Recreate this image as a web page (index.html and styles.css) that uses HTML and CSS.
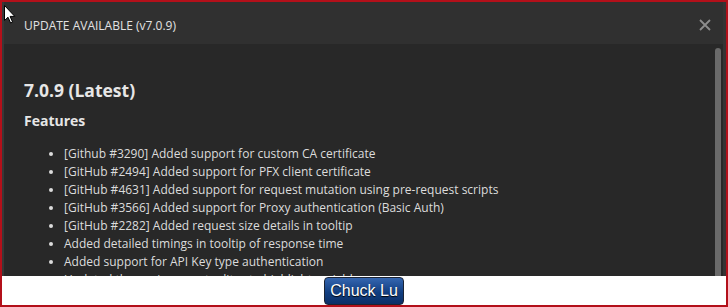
FILE: index.html
```html
<!DOCTYPE html>
<html>
<head>
<meta charset="utf-8">
<link rel="stylesheet" href="styles.css">
</head>
<body>
<div class="frame">
  <div class="screen">
    <div class="edge-left"></div>
    <div class="dialog">
      <div class="header">
        <span class="title">UPDATE AVAILABLE (v7.0.9)</span>
        <svg class="close" width="12" height="12" viewBox="0 0 12 12"><path d="M1 1 L11 11 M11 1 L1 11" stroke="#8c8c8c" stroke-width="1.8" fill="none"/></svg>
      </div>
      <div class="body">
        <div class="content">
          <h1 class="version">7.0.9 (Latest)</h1>
          <h2 class="section">Features</h2>
          <ul class="list">
            <li>[Github #3290] Added support for custom CA certificate</li>
            <li>[GitHub #2494] Added support for PFX client certificate</li>
            <li>[GitHub #4631] Added support for request mutation using pre-request scripts</li>
            <li>[GitHub #3566] Added support for Proxy authentication (Basic Auth)</li>
            <li>[GitHub #2282] Added request size details in tooltip</li>
            <li>Added detailed timings in tooltip of response time</li>
            <li>Added support for API Key type authentication</li>
            <li>Updated the environment editor to highlight variables</li>
          </ul>
        </div>
        <div class="scrollbar"><div class="thumb"></div></div>
      </div>
    </div>
    <div class="edge-right"></div>
  </div>
  <div class="footer">
    <button class="badge">Chuck Lu</button>
  </div>
  <svg class="cursor" width="12" height="19" viewBox="0 0 12 19"><path d="M0.5 0.5 L0.5 15.5 L4 12.2 L6.6 18 L8.6 17.1 L6.1 11.4 L10.8 11.4 Z" fill="#ffffff" stroke="#000000" stroke-width="1" stroke-linejoin="miter"/></svg>
</div>
</body>
</html>
```

FILE: styles.css
```css
html, body {
  margin: 0;
  padding: 0;
  background: #ffffff;
}
.frame {
  position: relative;
  box-sizing: border-box;
  width: 728px;
  height: 307px;
  border: 2px solid #b3101a;
  background: #ffffff;
  display: flex;
  flex-direction: column;
  overflow: hidden;
}
.cursor {
  position: absolute;
  left: 2px;
  top: 3px;
}
.screen {
  height: 274px;
  display: flex;
  flex: none;
  overflow: hidden;
}
.edge-left {
  width: 2px;
  background: #383838;
}
.edge-right {
  width: 3px;
  background: #343434;
}
.dialog {
  flex: 1;
  display: flex;
  flex-direction: column;
  background: #282828;
  font-family: "Open Sans", "Noto Sans", sans-serif;
  color: #dedede;
}
.header {
  height: 42px;
  flex: none;
  background: #303030;
  display: flex;
  align-items: center;
  justify-content: space-between;
  padding: 0 12px 0 20px;
}
.title {
  font-size: 12px;
  color: #e2e2e2;
  padding-top: 4px;
}
.close {
  display: block;
  margin-top: 4px;
}
.body {
  flex: 1;
  display: flex;
  overflow: hidden;
}
.content {
  flex: 1;
  padding: 35px 20px 0 20px;
}
.version {
  margin: 0;
  font-size: 17.5px;
  font-weight: 700;
  line-height: 22px;
  color: #e6e6e6;
}
.section {
  margin: 10px 0 0 0;
  font-size: 14px;
  font-weight: 700;
  line-height: 20px;
  color: #e6e6e6;
}
.list {
  margin: 14px 0 0 0;
  padding-left: 40px;
  font-size: 12px;
  line-height: 18px;
  color: #dcdcdc;
}
.scrollbar {
  width: 8px;
  flex: none;
  padding-top: 4px;
}
.thumb {
  width: 6px;
  height: 300px;
  background: #6a6a6a;
  border-radius: 3px;
}
.footer {
  flex: 1;
  display: flex;
  justify-content: center;
  align-items: flex-end;
}
.badge {
  width: 80px;
  height: 28px;
  margin: 0;
  padding: 0 0 1px 0;
  border: 1px solid #1c2434;
  border-radius: 4px;
  background: linear-gradient(#3566b0, #123f82 55%, #0b2f66);
  color: #ffffff;
  font-family: "Liberation Sans", Arial, sans-serif;
  font-size: 16px;
  text-shadow: 0 1px 1px #000;
}
```
